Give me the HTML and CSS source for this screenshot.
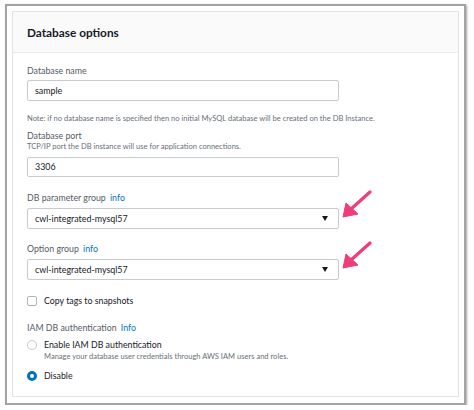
FILE: index.html
```html
<!DOCTYPE html>
<html>
<head>
<meta charset="utf-8">
<link rel="stylesheet" href="styles.css">
</head>
<body>
<div class="frame">
  <div class="panel">
    <div class="header"><h2 class="title">Database options</h2></div>
    <div class="content">
      <div class="field f-name">
        <div class="label">Database name</div>
        <div class="input">sample</div>
        <div class="note">Note: if no database name is specified then no initial MySQL database will be created on the DB Instance.</div>
      </div>
      <div class="field f-port">
        <div class="label">Database port</div>
        <div class="desc">TCP/IP port the DB instance will use for application connections.</div>
        <div class="input">3306</div>
      </div>
      <div class="field f-param">
        <div class="label">DB parameter group <span class="info">info</span></div>
        <div class="input select">cwl-integrated-mysql57<span class="caret"></span>
          <svg class="arrow" width="30" height="29" viewBox="0 0 30 29"><path d="M28 2 L9 19" stroke="#ee3d7a" stroke-width="3.2" stroke-linecap="round"/><path d="M1 27 L4 13 L16 24 Z" fill="#ee3d7a" stroke="#ee3d7a" stroke-width="1" stroke-linejoin="round"/></svg>
        </div>
      </div>
      <div class="field f-opt">
        <div class="label">Option group <span class="info">info</span></div>
        <div class="input select">cwl-integrated-mysql57<span class="caret"></span>
          <svg class="arrow" width="30" height="29" viewBox="0 0 30 29"><path d="M28 2 L9 19" stroke="#ee3d7a" stroke-width="3.2" stroke-linecap="round"/><path d="M1 27 L4 13 L16 24 Z" fill="#ee3d7a" stroke="#ee3d7a" stroke-width="1" stroke-linejoin="round"/></svg>
        </div>
      </div>
      <div class="check-row">
        <span class="checkbox"></span><span class="opt-label">Copy tags to snapshots</span>
      </div>
      <div class="field f-iam">
        <div class="label">IAM DB authentication <span class="info">Info</span></div>
        <div class="radio-row r-enable">
          <span class="radio"></span>
          <div>
            <div class="opt-label">Enable IAM DB authentication</div>
            <div class="desc">Manage your database user credentials through AWS IAM users and roles.</div>
          </div>
        </div>
        <div class="radio-row r-disable">
          <span class="radio on"></span>
          <div class="opt-label">Disable</div>
        </div>
      </div>
    </div>
  </div>
</div>
</body>
</html>
```
FILE: styles.css
```css
* { box-sizing: border-box; }
html, body { margin: 0; padding: 0; background: #fff; }
body { font-family: Lato, "Open Sans", "Liberation Sans", sans-serif; color: #545b64; }
.frame {
  margin: 4px 0 0 5px;
  width: 461px;
  height: 401px;
  border: 2px solid #a3a3a3;
  box-shadow: 1px 1px 2px rgba(0,0,0,0.35);
  padding: 5px 5px 0 5px;
  background: #fff;
}
.panel {
  border: 1px solid #e1e4e4;
  height: 386px;
  background: #fff;
}
.header {
  height: 41px;
  background: #fafafa;
  border-bottom: 1px solid #eaeded;
  display: flex;
  align-items: center;
  padding-left: 14px;
}
.title { margin: 0; font-size: 11.8px; font-weight: 700; color: #16191f; }
.content { padding: 12px 0 0 14px; }
.label { font-size: 8.8px; line-height: 12px; color: #545b64; }
.info { color: #0073bb; margin-left: 2px; }
.input {
  width: 312px;
  height: 21px;
  border: 1px solid #c6cbcb;
  border-radius: 2px;
  font-size: 8.9px;
  line-height: 19px;
  padding-left: 7px;
  color: #16191f;
  margin-top: 3px;
}
.note { font-size: 7.55px; line-height: 10px; color: #687078; margin-top: 13px; }
.desc { font-size: 7.55px; line-height: 10px; color: #687078; }
.f-port { margin-top: 6px; }
.f-port .input { margin-top: 5px; height: 20px; line-height: 18px; }
.f-param { margin-top: 15px; }
.f-opt { margin-top: 14px; }
.select { position: relative; margin-top: 4px; }
.caret {
  position: absolute;
  right: 10px;
  top: 7px;
  width: 0; height: 0;
  border-left: 3.5px solid transparent;
  border-right: 3.5px solid transparent;
  border-top: 5px solid #16191f;
}
.arrow { position: absolute; left: calc(100% + 4px); top: -19px; }
.check-row { display: flex; align-items: center; margin-top: 15px; }
.checkbox {
  width: 10px; height: 10px;
  border: 1px solid #aab7b8;
  border-radius: 2px;
  margin-right: 7px;
}
.opt-label { font-size: 8.8px; line-height: 12px; color: #16191f; }
.f-iam { margin-top: 15px; }
.radio-row { display: flex; align-items: flex-start; }
.r-enable { margin-top: 5px; }
.r-enable .desc { margin-top: 1px; }
.r-disable { margin-top: 8px; align-items: center; }
.radio {
  width: 10px; height: 10px;
  border: 1px solid #c6cbcb;
  border-radius: 50%;
  margin-right: 7px;
  margin-top: 1px;
  flex: none;
}
.radio.on { border: 3px solid #0073bb; margin-top: 0; }
```
